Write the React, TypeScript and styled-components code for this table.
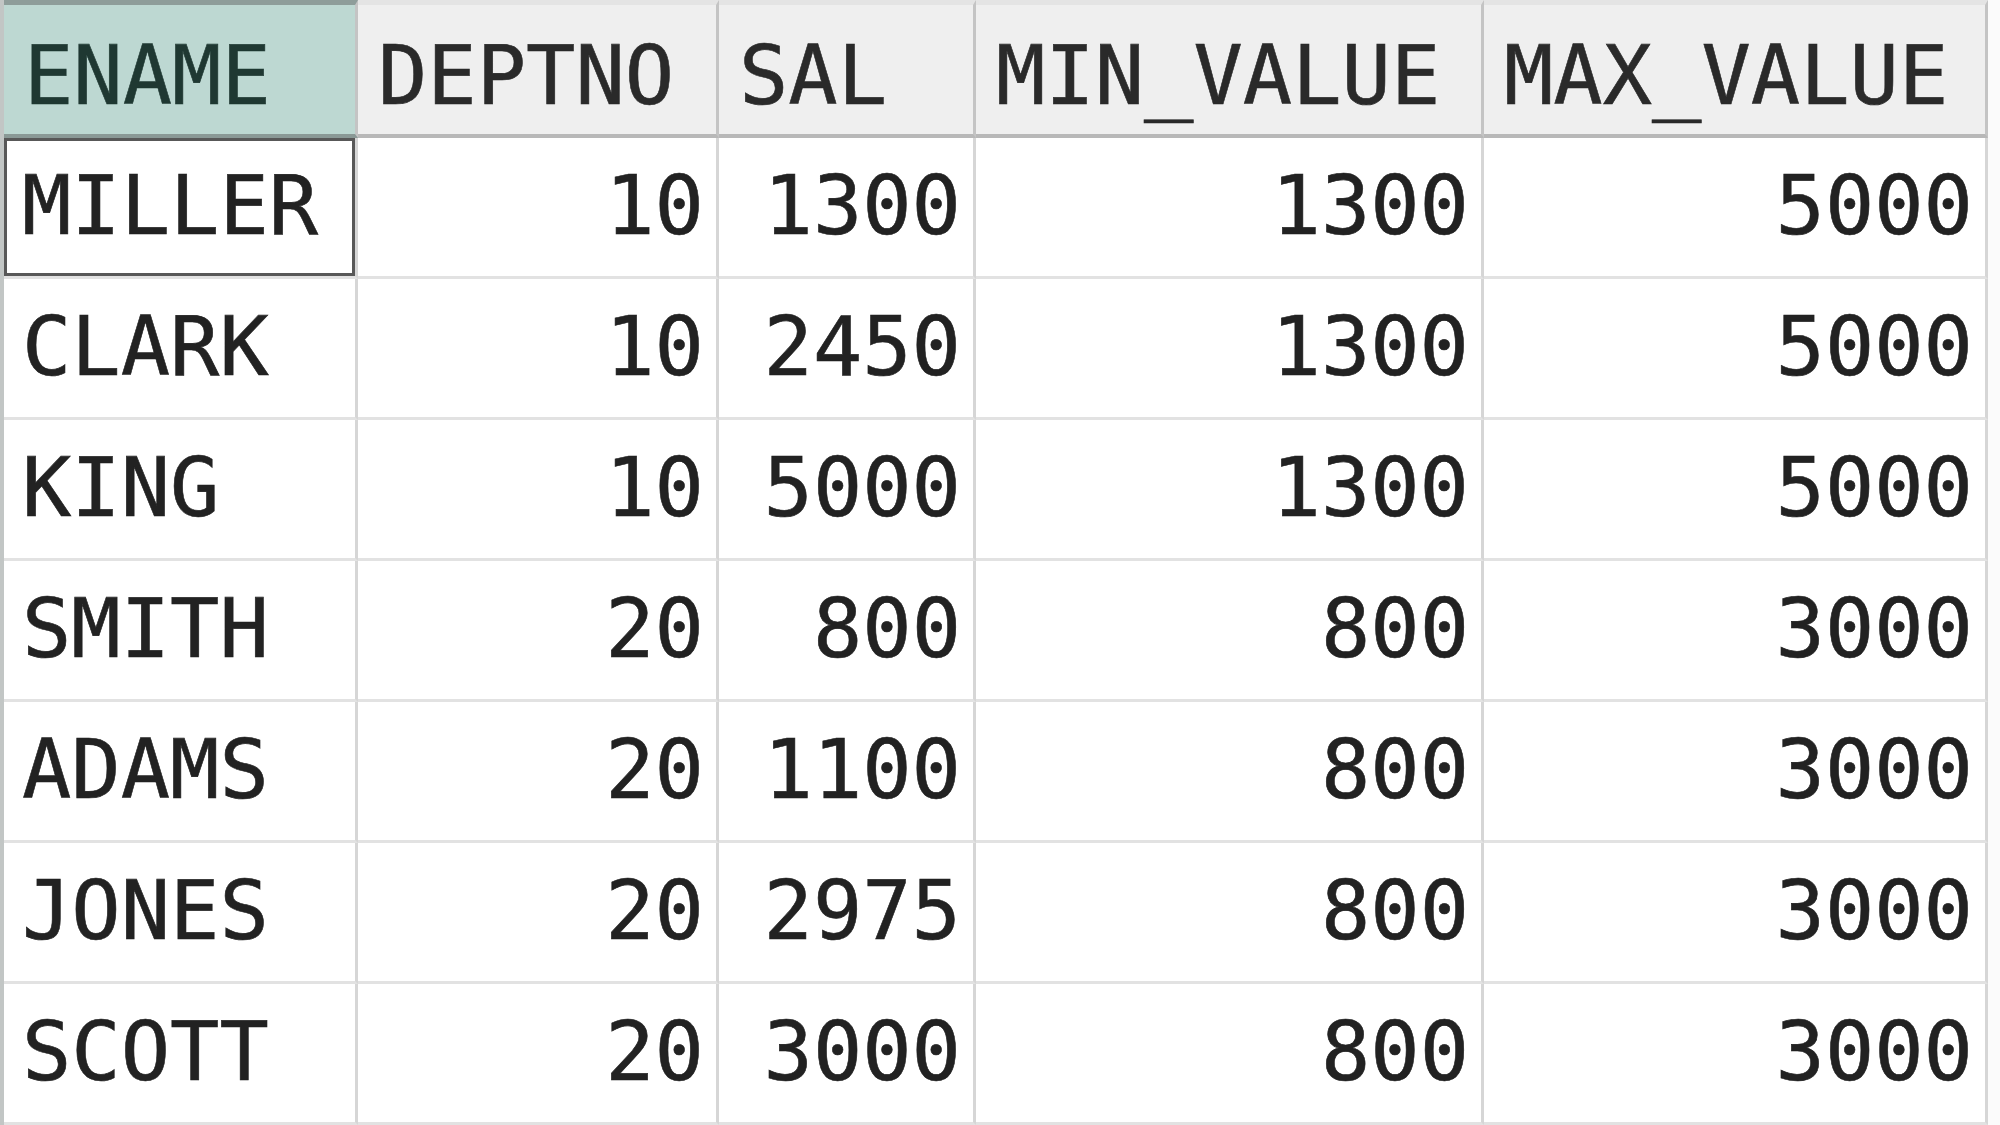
import React from "react";
import styled, { createGlobalStyle } from "styled-components";

const GlobalStyle = createGlobalStyle`
    html, body {
        margin: 0;
        padding: 0;
        background: #ffffff;
    }
    body {
        width: 2000px;
        height: 1125px;
        overflow: hidden;
    }
`;

const columns = [
    { key: "ename", title: "ENAME", width: 354, numeric: false },
    { key: "deptno", title: "DEPTNO", width: 361, numeric: true },
    { key: "sal", title: "SAL", width: 257, numeric: true },
    { key: "min", title: "MIN_VALUE", width: 508, numeric: true },
    { key: "max", title: "MAX_VALUE", width: 504, numeric: true },
];

const rows: string[][] = [
    ["MILLER", "10", "1300", "1300", "5000"],
    ["CLARK", "10", "2450", "1300", "5000"],
    ["KING", "10", "5000", "1300", "5000"],
    ["SMITH", "20", "800", "800", "3000"],
    ["ADAMS", "20", "1100", "800", "3000"],
    ["JONES", "20", "2975", "800", "3000"],
    ["SCOTT", "20", "3000", "800", "3000"],
];

export default function App() {
    return (
        <>
            <GlobalStyle />
            <Page>
                <Sheet $columns={columns.map(c => `${c.width}px`).join(" ")}>
                    {columns.map((col, i) => (
                        <HeaderCell key={col.key} $active={i === 0}>
                            {col.title}
                        </HeaderCell>
                    ))}
                    {rows.map((row, r) =>
                        row.map((value, c) => (
                            <Cell
                                key={`${r}-${c}`}
                                $numeric={columns[c].numeric}
                                $selected={r === 0 && c === 0}
                            >
                                {value}
                            </Cell>
                        ))
                    )}
                </Sheet>
            </Page>
        </>
    );
}

const Page = styled.div`
    width: 2000px;
    height: 1125px;
    background: #fbfbfb;
    display: flex;
`;

const Sheet = styled.div<{ $columns: string }>`
    display: grid;
    grid-template-columns: ${p => p.$columns};
    grid-template-rows: 138px repeat(7, 141px);
    border-left: 4px solid #c2c6c5;
    background: #ffffff;
    font-family: "DejaVu Sans Mono", "Liberation Mono", monospace;
    font-size: 82px;
    color: #222222;
    -webkit-text-stroke: 0.6px currentColor;
`;

const HeaderCell = styled.div<{ $active: boolean }>`
    display: flex;
    align-items: center;
    padding: 12px 14px 0 20px;
    box-sizing: border-box;
    background: ${p => (p.$active ? "#bdd8d2" : "#efefef")};
    color: ${p => (p.$active ? "#1f3832" : "#2a2a2a")};
    border-top: 5px solid ${p => (p.$active ? "#8e9d9a" : "#e4e4e4")};
    border-bottom: 4px solid ${p => (p.$active ? "#8a9996" : "#b8b8b8")};
    border-right: 3px solid #c4c4c4;
    white-space: nowrap;
`;

const Cell = styled.div<{ $numeric: boolean; $selected: boolean }>`
    display: flex;
    align-items: center;
    justify-content: ${p => (p.$numeric ? "flex-end" : "flex-start")};
    padding: 0 ${p => (p.$numeric ? "12px" : "14px")} 4px 18px;
    box-sizing: border-box;
    border-right: 3px solid #d6d6d6;
    border-bottom: 3px solid #e2e2e2;
    white-space: nowrap;
    box-shadow: ${p => (p.$selected ? "inset 0 0 0 3px #585858" : "none")};
`;
